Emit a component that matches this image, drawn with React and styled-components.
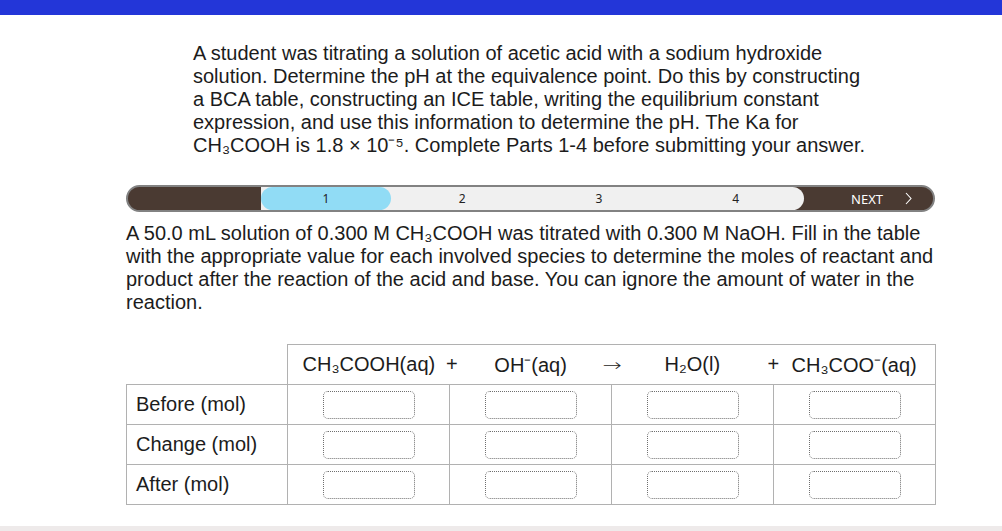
import React from "react";
import styled, { createGlobalStyle } from "styled-components";

const GlobalStyle = createGlobalStyle`
  html, body {
    margin: 0;
    padding: 0;
    overflow: hidden;
    background: #ffffff;
  }
  body {
    font-family: "Liberation Sans", Arial, sans-serif;
    color: #1c1c1c;
  }
`;

const Page = styled.div`
  height: 100vh;
  display: flex;
  flex-direction: column;
`;

const TopBar = styled.div`
  height: 15px;
  flex-shrink: 0;
  background: #2336d8;
`;

const Content = styled.main`
  width: 809px;
  margin-left: 126px;
  flex: 1;
`;

const Prompt = styled.p`
  margin: 27px 0 0 67px;
  font-size: 20px;
  line-height: 23px;
`;

const Stepper = styled.nav`
  margin-top: 28px;
  height: 23px;
  display: flex;
  background: #4a3a32;
  border: 2px solid #828282;
  border-radius: 14px;
  overflow: hidden;
`;

const LeftCap = styled.div`
  width: 129px;
  flex-shrink: 0;
`;

const Track = styled.div`
  width: 547px;
  flex-shrink: 0;
  display: grid;
  grid-template-columns: repeat(4, 1fr);
  background: linear-gradient(to right, transparent 4px, #f0f0f0 4px);
  border-radius: 0 12px 12px 0;
`;

const Step = styled.div`
  display: flex;
  align-items: center;
  justify-content: center;
  margin: ${(p) => (p.$active ? "0 3px 0 4px" : "0")};
  background: ${(p) => (p.$active ? "#91dcf5" : "transparent")};
  border-radius: 12px;
  font-family: "Noto Sans", "Open Sans", sans-serif;
  font-size: 12px;
  color: #222;
`;

const Next = styled.button`
  flex: 1;
  display: flex;
  align-items: center;
  justify-content: flex-end;
  gap: 22px;
  padding: 0 21px 0 0;
  border: none;
  background: transparent;
  color: #ffffff;
  font-family: "Noto Sans", "Open Sans", sans-serif;
  font-size: 13px;
  cursor: pointer;
`;

const Question = styled.p`
  margin: 10px 0 0;
  font-size: 20px;
  line-height: 23px;
`;

const Table = styled.table`
  margin-top: 30px;
  border-collapse: collapse;
  table-layout: fixed;
  width: 809px;
  font-size: 20px;
`;

const LabelCol = styled.col`
  width: 161px;
`;

const ValueCol = styled.col`
  width: 162px;
`;

const BlankHead = styled.th`
  border: none;
  padding: 0;
`;

const EquationCell = styled.th`
  height: 39px;
  padding: 0;
  border: 1px solid #b1b1b1;
  font-weight: normal;
`;

const Equation = styled.div`
  display: grid;
  grid-template-columns: 1fr 0 1fr 0 1fr 0 1fr;
  align-items: center;
`;

const Species = styled.span`
  text-align: center;
  white-space: nowrap;
`;

const Operator = styled.span`
  display: flex;
  justify-content: center;
  margin-left: ${(p) => p.$shift || 0}px;
  white-space: nowrap;
`;

const Arrow = styled(Operator)`
  font-family: "DejaVu Sans", sans-serif;
  font-size: 17px;
  font-weight: 200;
  transform: scaleX(1.35);
`;

const RowLabel = styled.td`
  height: 39px;
  padding: 0 0 0 9px;
  border: 1px solid #b1b1b1;
`;

const Cell = styled.td`
  padding: 0;
  border: 1px solid #b1b1b1;
  text-align: center;
`;

const AnswerBox = styled.input`
  box-sizing: border-box;
  width: 92px;
  height: 28px;
  vertical-align: middle;
  border: 1px dotted #6f6f6f;
  border-radius: 5px;
  background: #ffffff;
  font-size: 16px;
  outline: none;
`;

const Footer = styled.div`
  height: 5px;
  flex-shrink: 0;
  background: #eeeaea;
`;

const Chevron = () => (
  <svg width="7" height="13" viewBox="0 0 7 13" fill="none">
    <polyline points="1,1 6,6.5 1,12" stroke="#ffffff" strokeWidth="1.1" />
  </svg>
);

const rows = ["Before (mol)", "Change (mol)", "After (mol)"];

export default function App() {
  return (
    <>
      <GlobalStyle />
      <Page>
        <TopBar />
        <Content>
          <Prompt>
            A student was titrating a solution of acetic acid with a sodium hydroxide
            <br />
            solution. Determine the pH at the equivalence point. Do this by constructing
            <br />
            a BCA table, constructing an ICE table, writing the equilibrium constant
            <br />
            expression, and use this information to determine the pH. The Ka for
            <br />
            CH₃COOH is 1.8 × 10⁻⁵. Complete Parts 1-4 before submitting your answer.
          </Prompt>

          <Stepper>
            <LeftCap />
            <Track>
              <Step $active>1</Step>
              <Step>2</Step>
              <Step>3</Step>
              <Step>4</Step>
            </Track>
            <Next>
              NEXT
              <Chevron />
            </Next>
          </Stepper>

          <Question>
            A 50.0 mL solution of 0.300 M CH₃COOH was titrated with 0.300 M NaOH. Fill in the table
            <br />
            with the appropriate value for each involved species to determine the moles of reactant and
            <br />
            product after the reaction of the acid and base. You can ignore the amount of water in the
            <br />
            reaction.
          </Question>

          <Table>
            <colgroup>
              <LabelCol />
              <ValueCol />
              <ValueCol />
              <ValueCol />
              <ValueCol />
            </colgroup>
            <thead>
              <tr>
                <BlankHead />
                <EquationCell colSpan={4}>
                  <Equation>
                    <Species>CH₃COOH(aq)</Species>
                    <Operator $shift={2}>+</Operator>
                    <Species>OH⁻(aq)</Species>
                    <Arrow>→</Arrow>
                    <Species>H₂O(l)</Species>
                    <Operator>+</Operator>
                    <Species>CH₃COO⁻(aq)</Species>
                  </Equation>
                </EquationCell>
              </tr>
            </thead>
            <tbody>
              {rows.map((label) => (
                <tr key={label}>
                  <RowLabel>{label}</RowLabel>
                  {[0, 1, 2, 3].map((i) => (
                    <Cell key={i}>
                      <AnswerBox type="text" aria-label={`${label} ${i + 1}`} />
                    </Cell>
                  ))}
                </tr>
              ))}
            </tbody>
          </Table>
        </Content>
        <Footer />
      </Page>
    </>
  );
}
